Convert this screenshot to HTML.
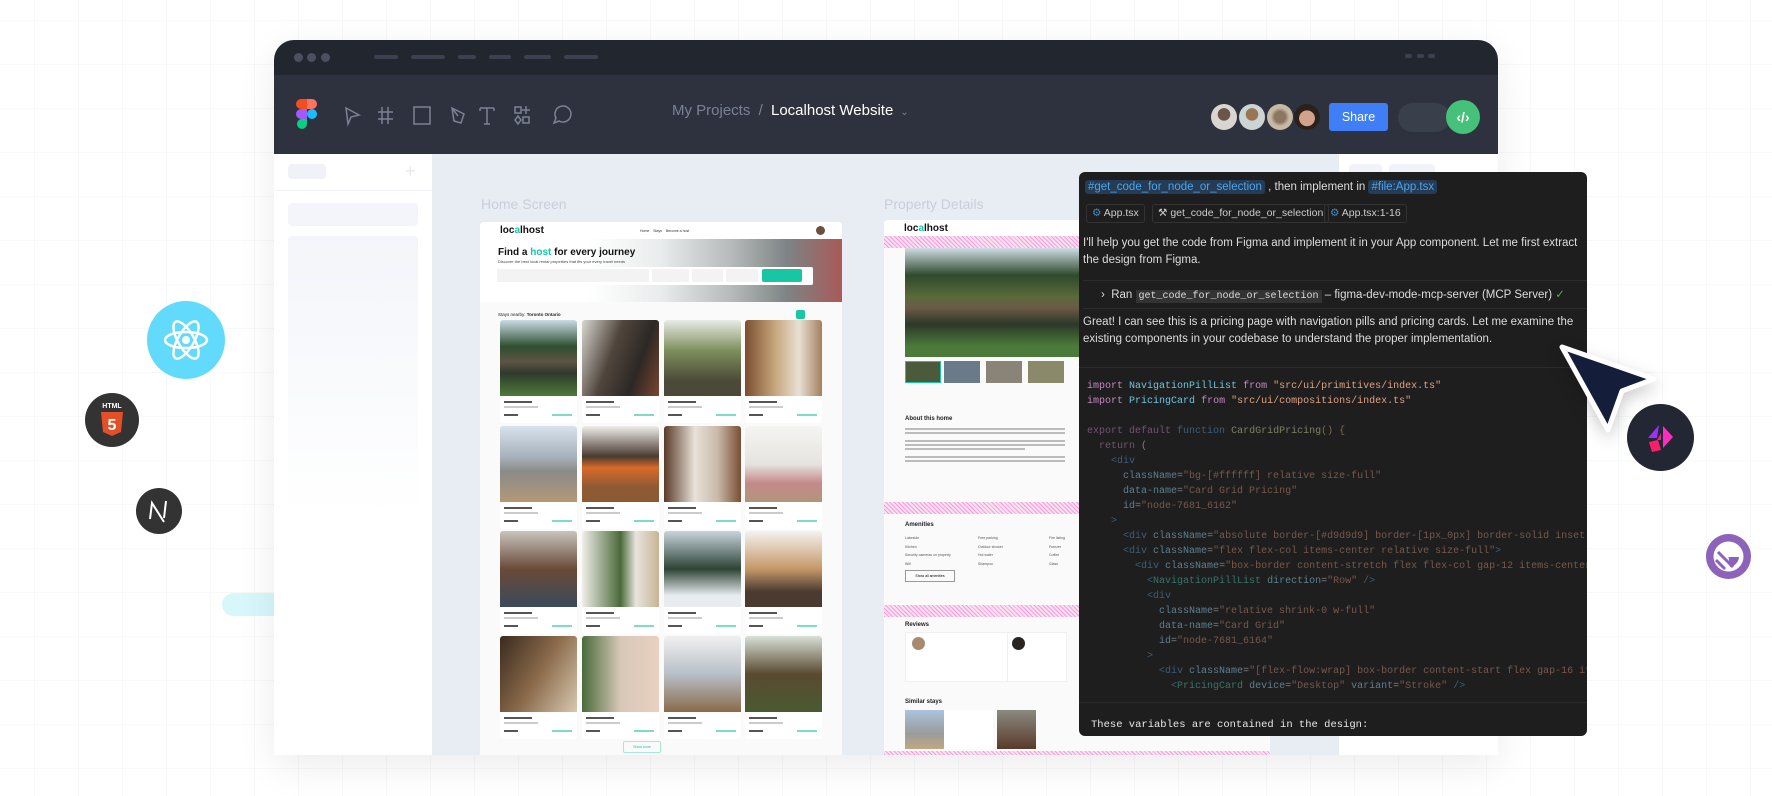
<!DOCTYPE html>
<html><head><meta charset="utf-8"><style>
*{margin:0;padding:0;box-sizing:border-box}
body{width:1772px;height:796px;overflow:hidden;position:relative;font-family:"Liberation Sans",sans-serif;
background-color:#fff;background-image:linear-gradient(#f7f8fa 1px,transparent 1px),linear-gradient(90deg,#f7f8fa 1px,transparent 1px);background-size:44px 44px;background-position:-10px 20px}
.a{position:absolute}
.win{left:274px;top:40px;width:1224px;height:715px;border-radius:20px 20px 0 0;overflow:hidden;background:#e8ecf3;box-shadow:0 10px 40px rgba(0,0,0,.08)}
.dash{position:absolute;height:4px;border-radius:2px;background:#3b4150;top:15px}
.img{position:absolute;border-radius:3px 3px 0 0}
.card{position:absolute;background:#fff;border-radius:3px}
.card i{position:absolute;left:4px;height:2px;background:#999;display:block}
.code{font-family:"Liberation Mono",monospace;font-size:10px;white-space:pre;position:absolute;left:8px}
.chip{display:inline-block;background:#243c55;color:#4fa3e8;border-radius:3px;padding:1px 3px}
.tag{position:absolute;top:32px;height:19px;border:1px solid #333;border-radius:3px;color:#ccc;font-size:10.5px;padding:2px 5px;white-space:nowrap}
.stripe{position:absolute;left:0;width:386px;height:12px;background:repeating-linear-gradient(45deg,#f29fd7 0 1px,#fbe1f3 1px 3px)}
</style></head><body>

<div class="a" style="left:147px;top:301px;width:78px;height:78px;border-radius:50%;background:#61dafb">
<svg width="78" height="78" viewBox="0 0 78 78"><g fill="none" stroke="#fff" stroke-width="2.5"><ellipse cx="39" cy="39" rx="21" ry="8"/><ellipse cx="39" cy="39" rx="21" ry="8" transform="rotate(60 39 39)"/><ellipse cx="39" cy="39" rx="21" ry="8" transform="rotate(-60 39 39)"/></g><circle cx="39" cy="39" r="4" fill="#fff"/></svg></div>
<div class="a" style="left:85px;top:393px;width:54px;height:54px;border-radius:50%;background:#333">
<div class="a" style="left:0;top:10px;width:54px;text-align:center;color:#fff;font-size:7px;font-weight:bold">HTML</div>
<svg class="a" style="left:16px;top:19px" width="22" height="24" viewBox="0 0 22 24"><path d="M0 0H22L20 20 11 24 2 20Z" fill="#e34f26"/><text x="11" y="18" text-anchor="middle" font-size="16" font-weight="bold" fill="#fff" font-family="Liberation Sans">5</text></svg></div>
<div class="a" style="left:136px;top:488px;width:46px;height:46px;border-radius:50%;background:#333">
<svg width="46" height="46"><path d="M14 31L16 15L28 34M30 13L28 30" stroke="#fff" stroke-width="2" fill="none"/></svg></div>
<div class="a" style="left:222px;top:593px;width:85px;height:23px;border-radius:12px;background:#d7f7fb"></div>

<div class="a" style="left:1627px;top:404px;width:67px;height:67px;border-radius:50%;background:#232733">
<svg width="67" height="67"><path d="M21 34L32 21L30 34Z" fill="#9b30ff"/><path d="M36 22L46 33L36 44Z" fill="#ff2dbb"/><path d="M22 38L31 36L34 46L25 48Z" fill="#ff1d6b"/><path d="M30 36L34 29L34 36Z" fill="#e21f8d"/></svg></div>
<div class="a" style="left:1706px;top:534px;width:45px;height:45px;border-radius:50%;background:#8c62ba">
<svg width="45" height="45"><circle cx="22.5" cy="22.5" r="15" fill="#fff"/><path d="M10 26L19 35M12 18L27 33" stroke="#8c62ba" stroke-width="3"/><path d="M22.5 23H33A11 11 0 0 1 24 33" fill="#8c62ba"/></svg></div>

<div class="a win">
  <div class="a" style="left:0;top:0;width:1224px;height:35px;background:#22262f">
    <div class="a" style="left:20px;top:13px;width:9px;height:9px;border-radius:50%;background:#4a5060"></div>
    <div class="a" style="left:33px;top:13px;width:9px;height:9px;border-radius:50%;background:#4a5060"></div>
    <div class="a" style="left:47px;top:13px;width:9px;height:9px;border-radius:50%;background:#4a5060"></div>
    <div class="dash" style="left:100px;width:24px"></div><div class="dash" style="left:137px;width:34px"></div><div class="dash" style="left:184px;width:18px"></div><div class="dash" style="left:215px;width:22px"></div><div class="dash" style="left:250px;width:27px"></div><div class="dash" style="left:290px;width:34px"></div>
    <div class="dash" style="left:1131px;width:7px;top:14px"></div><div class="dash" style="left:1143px;width:7px;top:14px"></div><div class="dash" style="left:1154px;width:7px;top:14px"></div>
  </div>
  <div class="a" style="left:0;top:35px;width:1224px;height:79px;background:#2e323e">
    <svg class="a" style="left:22px;top:24px" width="22" height="32" viewBox="0 0 22 32"><path d="M5 0H11V10H5A5 5 0 0 1 5 0Z" fill="#f24e1e"/><path d="M11 0H16A5 5 0 0 1 16 10H11Z" fill="#ff7262"/><path d="M5 10H11V20H5A5 5 0 0 1 5 10Z" fill="#a259ff"/><circle cx="16" cy="15" r="5" fill="#1abcfe"/><path d="M5 20H11V25A5 5 0 1 1 5 20Z" fill="#0acf83"/></svg>
    <svg class="a" style="left:66px;top:28px" width="240" height="24" viewBox="0 0 240 24" fill="none" stroke="#7b8294" stroke-width="1.5">
      <path d="M6 5L19 12L11 14L8 21Z"/>
      <path d="M42 4V21M48 4V21M38 9H53M38 16H53"/>
      <rect x="74" y="4" width="16" height="17"/>
      <path d="M112 5L124 11L121 20L114 18ZM112 5L118 13"/>
      <path d="M140 5H154M147 5V21M144 21H150M140 5V8M154 5V8"/>
      <rect x="175" y="4" width="6" height="6"/><rect x="183" y="14" width="6" height="6"/><path d="M186 3V11M182 7H190M178 13L181 17 178 21 175 17Z"/>
      <path d="M214 20L216 15A8 8 0 1 1 219 18Z"/>
    </svg>
    <div class="a" style="left:398px;top:27px;font-size:15px;color:#7b8294">My Projects&nbsp;&nbsp;/</div>
    <div class="a" style="left:497px;top:27px;font-size:15px;color:#fff">Localhost Website <span style="color:#7b8294;font-size:10px">&nbsp;⌄</span></div>
    <div class="a" style="left:937px;top:29px;width:26px;height:26px;border-radius:50%;background:radial-gradient(circle at 50% 40%,#6a5548 30%,#d9d5d0 32%)"></div>
    <div class="a" style="left:965px;top:29px;width:26px;height:26px;border-radius:50%;background:radial-gradient(circle at 50% 40%,#9b7656 30%,#cbd6d4 32%)"></div>
    <div class="a" style="left:993px;top:29px;width:26px;height:26px;border-radius:50%;background:radial-gradient(circle at 50% 50%,#8c7662 30%,#c6b9a6 50%)"></div>
    <div class="a" style="left:1020px;top:29px;width:26px;height:26px;border-radius:50%;background:radial-gradient(circle at 50% 55%,#d2a38a 40%,#2b211c 42%)"></div>
    <div class="a" style="left:1055px;top:28px;width:59px;height:28px;border-radius:3px;background:#3f7ef6;color:#fff;font-size:12.5px;text-align:center;line-height:28px">Share</div>
    <div class="a" style="left:1124px;top:28px;width:52px;height:29px;border-radius:15px;background:#3a3f4c"></div>
    <div class="a" style="left:1172px;top:25px;width:34px;height:34px;border-radius:50%;background:#45c17a;color:#fff;font-size:14px;text-align:center;line-height:34px;font-weight:bold">‹/›</div>
  </div>
  <div class="a" style="left:0;top:114px;width:158px;height:601px;background:#fff">
    <div class="a" style="left:14px;top:10px;width:38px;height:15px;border-radius:4px;background:#f0f2f7"></div>
    <div class="a" style="left:131px;top:7px;font-size:18px;color:#e6e9f1">+</div>
    <div class="a" style="left:0;top:36px;width:158px;height:1px;background:#f0f2f6"></div>
    <div class="a" style="left:14px;top:49px;width:130px;height:23px;border-radius:4px;background:#f3f5fa"></div>
    <div class="a" style="left:14px;top:82px;width:130px;height:280px;border-radius:4px;background:linear-gradient(#f3f5fa,#fff)"></div>
  </div>
  <div class="a" style="left:1065px;top:114px;width:159px;height:601px;background:#fff">
    <div class="a" style="left:10px;top:10px;width:33px;height:15px;border-radius:4px;background:#f1f3f8"></div>
    <div class="a" style="left:50px;top:10px;width:46px;height:15px;border-radius:4px;background:#f1f3f8"></div>
  </div>

  <div class="a" style="left:207px;top:156px;font-size:14px;color:#c9ceda">Home Screen</div>
  <div class="a" style="left:610px;top:156px;font-size:14px;color:#c9ceda">Property Details</div>

  <div class="a" style="left:206px;top:182px;width:362px;height:533px;background:#fafafa;border-radius:4px 4px 0 0;overflow:hidden">
    <div class="a" style="left:0;top:0;width:362px;height:17px;background:#fff"></div>
    <div class="a" style="left:20px;top:3px;font-size:10px;font-weight:bold;color:#111">loc<span style="color:#18c6a3">a</span>lhost</div>
    <div class="a" style="left:160px;top:7px;font-size:3.5px;color:#333">Home &nbsp;&nbsp;&nbsp;Stays &nbsp;&nbsp;&nbsp;Become a host</div>
    <div class="a" style="left:336px;top:4px;width:9px;height:9px;border-radius:50%;background:#6b5040"></div>
    <div class="a" style="left:0;top:17px;width:362px;height:63px;background:linear-gradient(90deg,#fff 30%,#e9ecec 50%,#b4b8b8 70%,#7d8384 85%,#a95a58)"></div>
    <div class="a" style="left:18px;top:25px;font-size:10px;font-weight:bold;color:#111">Find a <span style="color:#18c6a3">host</span> for every journey</div>
    <div class="a" style="left:18px;top:37px;font-size:4px;color:#444">Discover the best local rental properties that fits your every travel needs</div>
    <div class="a" style="left:15px;top:45px;width:318px;height:18px;background:#fff;border-radius:2px"></div>
    <div class="a" style="left:17px;top:47px;width:152px;height:13px;background:#f3f3f3"></div>
    <div class="a" style="left:172px;top:47px;width:37px;height:13px;background:#f3f3f3"></div>
    <div class="a" style="left:212px;top:47px;width:31px;height:13px;background:#f3f3f3"></div>
    <div class="a" style="left:246px;top:47px;width:32px;height:13px;background:#f3f3f3"></div>
    <div class="a" style="left:282px;top:47px;width:40px;height:13px;background:#18c6a3;border-radius:2px"></div>
    <div class="a" style="left:18px;top:90px;font-size:4.5px;color:#222">Stays nearby: <b>Toronto Ontario</b></div>
    <div class="a" style="left:316px;top:88px;width:9px;height:9px;background:#18c6a3;border-radius:2px"></div>

    <div class="card" style="left:20px;top:98px;width:77px;height:103px"><i style="top:81px;width:28px;background:#555"></i><i style="top:86px;width:34px;background:#ccc"></i><i style="top:94px;width:14px;background:#555"></i><i style="top:94px;left:52px;width:20px;background:#7ddcc6"></i></div><div class="img" style="left:20px;top:98px;width:77px;height:76px;background:linear-gradient(#c9dbe4,#2f4f2f 35%,#5e5444 55%,#2e3a2d 70%,#4e7a39)"></div>
    <div class="card" style="left:102px;top:98px;width:77px;height:103px"><i style="top:81px;width:28px;background:#555"></i><i style="top:86px;width:34px;background:#ccc"></i><i style="top:94px;width:14px;background:#555"></i><i style="top:94px;left:52px;width:20px;background:#7ddcc6"></i></div><div class="img" style="left:102px;top:98px;width:77px;height:76px;background:linear-gradient(110deg,#d8d6d0,#50453c 40%,#2c2824 70%,#7a4630)"></div>
    <div class="card" style="left:184px;top:98px;width:77px;height:103px"><i style="top:81px;width:28px;background:#555"></i><i style="top:86px;width:34px;background:#ccc"></i><i style="top:94px;width:14px;background:#555"></i><i style="top:94px;left:52px;width:20px;background:#7ddcc6"></i></div><div class="img" style="left:184px;top:98px;width:77px;height:76px;background:linear-gradient(#e8ece6,#7e8f5c 40%,#4b4a38 80%)"></div>
    <div class="card" style="left:265px;top:98px;width:77px;height:103px"><i style="top:81px;width:28px;background:#555"></i><i style="top:86px;width:34px;background:#ccc"></i><i style="top:94px;width:14px;background:#555"></i><i style="top:94px;left:52px;width:20px;background:#7ddcc6"></i></div><div class="img" style="left:265px;top:98px;width:77px;height:76px;background:linear-gradient(90deg,#7a4e30,#c9a87e 40%,#e8e0d4 70%,#a4805e)"></div>

    <div class="card" style="left:20px;top:204px;width:77px;height:103px"><i style="top:81px;width:28px;background:#555"></i><i style="top:86px;width:34px;background:#ccc"></i><i style="top:94px;width:14px;background:#555"></i><i style="top:94px;left:52px;width:20px;background:#7ddcc6"></i></div><div class="img" style="left:20px;top:204px;width:77px;height:76px;background:linear-gradient(#d8e2ec,#a8b2bc 40%,#8a8b88 60%,#b49876)"></div>
    <div class="card" style="left:102px;top:204px;width:77px;height:103px"><i style="top:81px;width:28px;background:#555"></i><i style="top:86px;width:34px;background:#ccc"></i><i style="top:94px;width:14px;background:#555"></i><i style="top:94px;left:52px;width:20px;background:#7ddcc6"></i></div><div class="img" style="left:102px;top:204px;width:77px;height:76px;background:linear-gradient(#f0eeea,#4a3a30 40%,#d96a28 55%,#8e5a34 80%)"></div>
    <div class="card" style="left:184px;top:204px;width:77px;height:103px"><i style="top:81px;width:28px;background:#555"></i><i style="top:86px;width:34px;background:#ccc"></i><i style="top:94px;width:14px;background:#555"></i><i style="top:94px;left:52px;width:20px;background:#7ddcc6"></i></div><div class="img" style="left:184px;top:204px;width:77px;height:76px;background:linear-gradient(90deg,#5a3a28,#e8e2d8 40%,#c8b8a8 70%,#7a4e34)"></div>
    <div class="card" style="left:265px;top:204px;width:77px;height:103px"><i style="top:81px;width:28px;background:#555"></i><i style="top:86px;width:34px;background:#ccc"></i><i style="top:94px;width:14px;background:#555"></i><i style="top:94px;left:52px;width:20px;background:#7ddcc6"></i></div><div class="img" style="left:265px;top:204px;width:77px;height:76px;background:linear-gradient(#f4f4f2,#e6e4e0 50%,#c48a8a 75%,#b0967a)"></div>

    <div class="card" style="left:20px;top:309px;width:77px;height:103px"><i style="top:81px;width:28px;background:#555"></i><i style="top:86px;width:34px;background:#ccc"></i><i style="top:94px;width:14px;background:#555"></i><i style="top:94px;left:52px;width:20px;background:#7ddcc6"></i></div><div class="img" style="left:20px;top:309px;width:77px;height:76px;background:linear-gradient(#c8c4bc,#6a4a38 50%,#3a4a5a)"></div>
    <div class="card" style="left:102px;top:309px;width:77px;height:103px"><i style="top:81px;width:28px;background:#555"></i><i style="top:86px;width:34px;background:#ccc"></i><i style="top:94px;width:14px;background:#555"></i><i style="top:94px;left:52px;width:20px;background:#7ddcc6"></i></div><div class="img" style="left:102px;top:309px;width:77px;height:76px;background:linear-gradient(90deg,#f0eee8,#4a6a3a 50%,#e8e4de 70%,#c8b494)"></div>
    <div class="card" style="left:184px;top:309px;width:77px;height:103px"><i style="top:81px;width:28px;background:#555"></i><i style="top:86px;width:34px;background:#ccc"></i><i style="top:94px;width:14px;background:#555"></i><i style="top:94px;left:52px;width:20px;background:#7ddcc6"></i></div><div class="img" style="left:184px;top:309px;width:77px;height:76px;background:linear-gradient(#c8d4dc,#2e4436 50%,#e8ecf0 85%)"></div>
    <div class="card" style="left:265px;top:309px;width:77px;height:103px"><i style="top:81px;width:28px;background:#555"></i><i style="top:86px;width:34px;background:#ccc"></i><i style="top:94px;width:14px;background:#555"></i><i style="top:94px;left:52px;width:20px;background:#7ddcc6"></i></div><div class="img" style="left:265px;top:309px;width:77px;height:76px;background:linear-gradient(#f4f2ee,#c49868 50%,#4a3a30 80%)"></div>

    <div class="card" style="left:20px;top:414px;width:77px;height:103px"><i style="top:81px;width:28px;background:#555"></i><i style="top:86px;width:34px;background:#ccc"></i><i style="top:94px;width:14px;background:#555"></i><i style="top:94px;left:52px;width:20px;background:#7ddcc6"></i></div><div class="img" style="left:20px;top:414px;width:77px;height:76px;background:linear-gradient(120deg,#3a2a1e,#8a6a4a 50%,#d8c8b0)"></div>
    <div class="card" style="left:102px;top:414px;width:77px;height:103px"><i style="top:81px;width:28px;background:#555"></i><i style="top:86px;width:34px;background:#ccc"></i><i style="top:94px;width:14px;background:#555"></i><i style="top:94px;left:52px;width:20px;background:#7ddcc6"></i></div><div class="img" style="left:102px;top:414px;width:77px;height:76px;background:linear-gradient(90deg,#4a6a3a,#d8c8b8 50%,#e8d0c0)"></div>
    <div class="card" style="left:184px;top:414px;width:77px;height:103px"><i style="top:81px;width:28px;background:#555"></i><i style="top:86px;width:34px;background:#ccc"></i><i style="top:94px;width:14px;background:#555"></i><i style="top:94px;left:52px;width:20px;background:#7ddcc6"></i></div><div class="img" style="left:184px;top:414px;width:77px;height:76px;background:linear-gradient(#f0f0f0,#b8c0c8 50%,#8a6a4a)"></div>
    <div class="card" style="left:265px;top:414px;width:77px;height:103px"><i style="top:81px;width:28px;background:#555"></i><i style="top:86px;width:34px;background:#ccc"></i><i style="top:94px;width:14px;background:#555"></i><i style="top:94px;left:52px;width:20px;background:#7ddcc6"></i></div><div class="img" style="left:265px;top:414px;width:77px;height:76px;background:linear-gradient(#d8e0d8,#5a4a30 50%,#4a5a30)"></div>
    <div class="a" style="left:143px;top:519px;width:38px;height:12px;border:1px solid #a8e8d8;border-radius:2px;font-size:3.5px;color:#18c6a3;text-align:center;line-height:10px">Show more</div>
  </div>

  <div class="a" style="left:610px;top:180px;width:386px;height:535px;background:#fafafa;border-radius:4px 4px 0 0;overflow:hidden">
    <div class="a" style="left:0;top:0;width:386px;height:16px;background:#fff"></div>
    <div class="a" style="left:20px;top:3px;font-size:10px;font-weight:bold;color:#111">loc<span style="color:#18c6a3">a</span>lhost</div>
    <div class="stripe" style="top:16px"></div>
    <div class="a" style="left:21px;top:28px;width:180px;height:109px;background:linear-gradient(#cfdde4,#2f4a2c 25%,#5a6a3a 45%,#6b5a48 55%,#2c3828 70%,#4b7a3a 90%)"></div>
    <div class="a" style="left:21px;top:141px;width:36px;height:22px;background:#4a5a3a;border:1px solid #18c6a3"></div>
    <div class="a" style="left:60px;top:141px;width:36px;height:22px;background:#6a7a88"></div>
    <div class="a" style="left:102px;top:141px;width:36px;height:22px;background:#8a8478"></div>
    <div class="a" style="left:144px;top:141px;width:36px;height:22px;background:#8a8a6a"></div>
    <div class="a" style="left:21px;top:196px;font-size:6px;font-weight:bold;color:#222">About this home</div>
    <div class="a" style="left:21px;top:208px;width:160px;height:2px;background:#bbb"></div>
    <div class="a" style="left:21px;top:212px;width:160px;height:2px;background:#bbb"></div>
    <div class="a" style="left:21px;top:220px;width:160px;height:2px;background:#bbb"></div>
    <div class="a" style="left:21px;top:224px;width:160px;height:2px;background:#bbb"></div>
    <div class="a" style="left:21px;top:228px;width:120px;height:2px;background:#bbb"></div>
    <div class="a" style="left:21px;top:236px;width:160px;height:2px;background:#bbb"></div>
    <div class="a" style="left:21px;top:240px;width:160px;height:2px;background:#bbb"></div>
    <div class="stripe" style="top:282px"></div>
    <div class="a" style="left:21px;top:302px;font-size:6px;font-weight:bold;color:#222">Amenities</div>
    <div class="a" style="left:21px;top:314px;font-size:3.5px;color:#555;line-height:8.5px">Lakeside<br>Kitchen<br>Security cameras on property<br>Wifi</div>
    <div class="a" style="left:94px;top:314px;font-size:3.5px;color:#555;line-height:8.5px">Free parking<br>Outdoor shower<br>Hot water<br>Shampoo</div>
    <div class="a" style="left:165px;top:314px;font-size:3.5px;color:#555;line-height:8.5px">Fire listing<br>Freezer<br>Coffee<br>Glass</div>
    <div class="a" style="left:21px;top:350px;width:50px;height:12px;border:1px solid #999;font-size:3.5px;text-align:center;line-height:10px">Show all amenities</div>
    <div class="stripe" style="top:385px"></div>
    <div class="a" style="left:21px;top:402px;font-size:6px;font-weight:bold;color:#222">Reviews</div>
    <div class="a" style="left:21px;top:412px;width:110px;height:50px;background:#fff;border:1px solid #f0f0f0"></div>
    <div class="a" style="left:28px;top:417px;width:13px;height:13px;border-radius:50%;background:#a88a70"></div>
    <div class="a" style="left:123px;top:412px;width:60px;height:50px;background:#fff;border:1px solid #f0f0f0"></div>
    <div class="a" style="left:128px;top:417px;width:13px;height:13px;border-radius:50%;background:#2a2420"></div>
    <div class="a" style="left:21px;top:479px;font-size:6px;font-weight:bold;color:#222">Similar stays</div>
    <div class="a" style="left:21px;top:490px;width:88px;height:39px;background:#fff"></div>
    <div class="a" style="left:21px;top:490px;width:39px;height:39px;background:linear-gradient(#aac4dc,#9a9c9c 60%,#c0a880)"></div>
    <div class="a" style="left:113px;top:490px;width:39px;height:39px;background:linear-gradient(#8a8a80,#5a3a2a)"></div>
    <div class="stripe" style="top:531px"></div>
  </div>
</div>

<div class="a" style="left:1079px;top:172px;width:508px;height:564px;background:#1e1e1e;border-radius:6px;overflow:hidden;color:#ddd;font-size:11.5px">
  <div class="a" style="left:6px;top:8px;white-space:nowrap"><span class="chip">#get_code_for_node_or_selection</span> , then implement in <span class="chip">#file:App.tsx</span></div>
  <div class="tag" style="left:7px"><span style="color:#4a8ab8">⚙</span> App.tsx</div>
  <div class="tag" style="left:73px">⚒ get_code_for_node_or_selection</div>
  <div class="tag" style="left:245px"><span style="color:#4a8ab8">⚙</span> App.tsx:1-16</div>
  <div class="a" style="left:4px;top:63px;line-height:17px;width:504px">I'll help you get the code from Figma and implement it in your App component. Let me first extract the design from Figma.</div>
  <div class="a" style="left:4px;top:108px;width:504px;height:29px;border-top:1px solid #2c2c2c;border-bottom:1px solid #2c2c2c"></div>
  <div class="a" style="left:22px;top:115px;white-space:nowrap">›&nbsp;&nbsp;Ran <span style="font-family:'Liberation Mono',monospace;background:#333;padding:1px 3px;font-size:10px">get_code_for_node_or_selection</span> – figma-dev-mode-mcp-server (MCP Server) <span style="color:#4caf50">✓</span></div>
  <div class="a" style="left:4px;top:142px;line-height:17px;width:504px">Great! I can see this is a pricing page with navigation pills and pricing cards. Let me examine the existing components in your codebase to understand the proper implementation.</div>
  <div class="a" style="left:0;top:195px;width:508px;height:1px;background:#2c2c2c"></div>
  <div class="code" style="top:207px;line-height:15px"><span style="color:#c586c0">import</span> <span style="color:#6cc4e0">NavigationPillList</span> <span style="color:#c586c0">from</span> <span style="color:#e0a080">"src/ui/primitives/index.ts"</span>
<span style="color:#c586c0">import</span> <span style="color:#6cc4e0">PricingCard</span> <span style="color:#c586c0">from</span> <span style="color:#e0a080">"src/ui/compositions/index.ts"</span></div>
  <div class="code" style="top:252px;line-height:15px;opacity:.5"><span style="color:#c586c0">export default</span> <span style="color:#569cd6">function</span> <span style="color:#dcdcaa">CardGridPricing</span><span style="color:#d7ba7d">() {</span>
  <span style="color:#c586c0">return</span> (
    <span style="color:#569cd6">&lt;div</span>
      <span style="color:#9cdcfe">className</span>=<span style="color:#ce9178">"bg-[#ffffff] relative size-full"</span>
      <span style="color:#9cdcfe">data-name</span>=<span style="color:#ce9178">"Card Grid Pricing"</span>
      <span style="color:#9cdcfe">id</span>=<span style="color:#ce9178">"node-7681_6162"</span>
    <span style="color:#569cd6">&gt;</span>
      <span style="color:#569cd6">&lt;div</span> <span style="color:#9cdcfe">className</span>=<span style="color:#ce9178">"absolute border-[#d9d9d9] border-[1px_0px] border-solid inset-0"</span>
      <span style="color:#569cd6">&lt;div</span> <span style="color:#9cdcfe">className</span>=<span style="color:#ce9178">"flex flex-col items-center relative size-full"</span><span style="color:#569cd6">&gt;</span>
        <span style="color:#569cd6">&lt;div</span> <span style="color:#9cdcfe">className</span>=<span style="color:#ce9178">"box-border content-stretch flex flex-col gap-12 items-center</span>
          <span style="color:#569cd6">&lt;</span><span style="color:#4ec9b0">NavigationPillList</span> <span style="color:#9cdcfe">direction</span>=<span style="color:#ce9178">"Row"</span> <span style="color:#569cd6">/&gt;</span>
          <span style="color:#569cd6">&lt;div</span>
            <span style="color:#9cdcfe">className</span>=<span style="color:#ce9178">"relative shrink-0 w-full"</span>
            <span style="color:#9cdcfe">data-name</span>=<span style="color:#ce9178">"Card Grid"</span>
            <span style="color:#9cdcfe">id</span>=<span style="color:#ce9178">"node-7681_6164"</span>
          <span style="color:#569cd6">&gt;</span>
            <span style="color:#569cd6">&lt;div</span> <span style="color:#9cdcfe">className</span>=<span style="color:#ce9178">"[flex-flow:wrap] box-border content-start flex gap-16 items</span>
              <span style="color:#569cd6">&lt;</span><span style="color:#4ec9b0">PricingCard</span> <span style="color:#9cdcfe">device</span>=<span style="color:#ce9178">"Desktop"</span> <span style="color:#9cdcfe">variant</span>=<span style="color:#ce9178">"Stroke"</span> <span style="color:#569cd6">/&gt;</span></div>
  <div class="a" style="left:0;top:530px;width:508px;height:1px;background:#2a2a2a"></div>
  <div class="code" style="top:547px;left:12px;color:#e8e8e8;font-size:10.5px">These variables are contained in the design:</div>
</div>

<svg class="a" style="left:1550px;top:335px;filter:drop-shadow(0 6px 8px rgba(0,0,0,.2))" width="120" height="110" viewBox="0 0 120 110"><path d="M12 12L104 44L72 56L58 95Z" fill="#141d3a" stroke="#fff" stroke-width="5" stroke-linejoin="round"/></svg>
</body></html>
